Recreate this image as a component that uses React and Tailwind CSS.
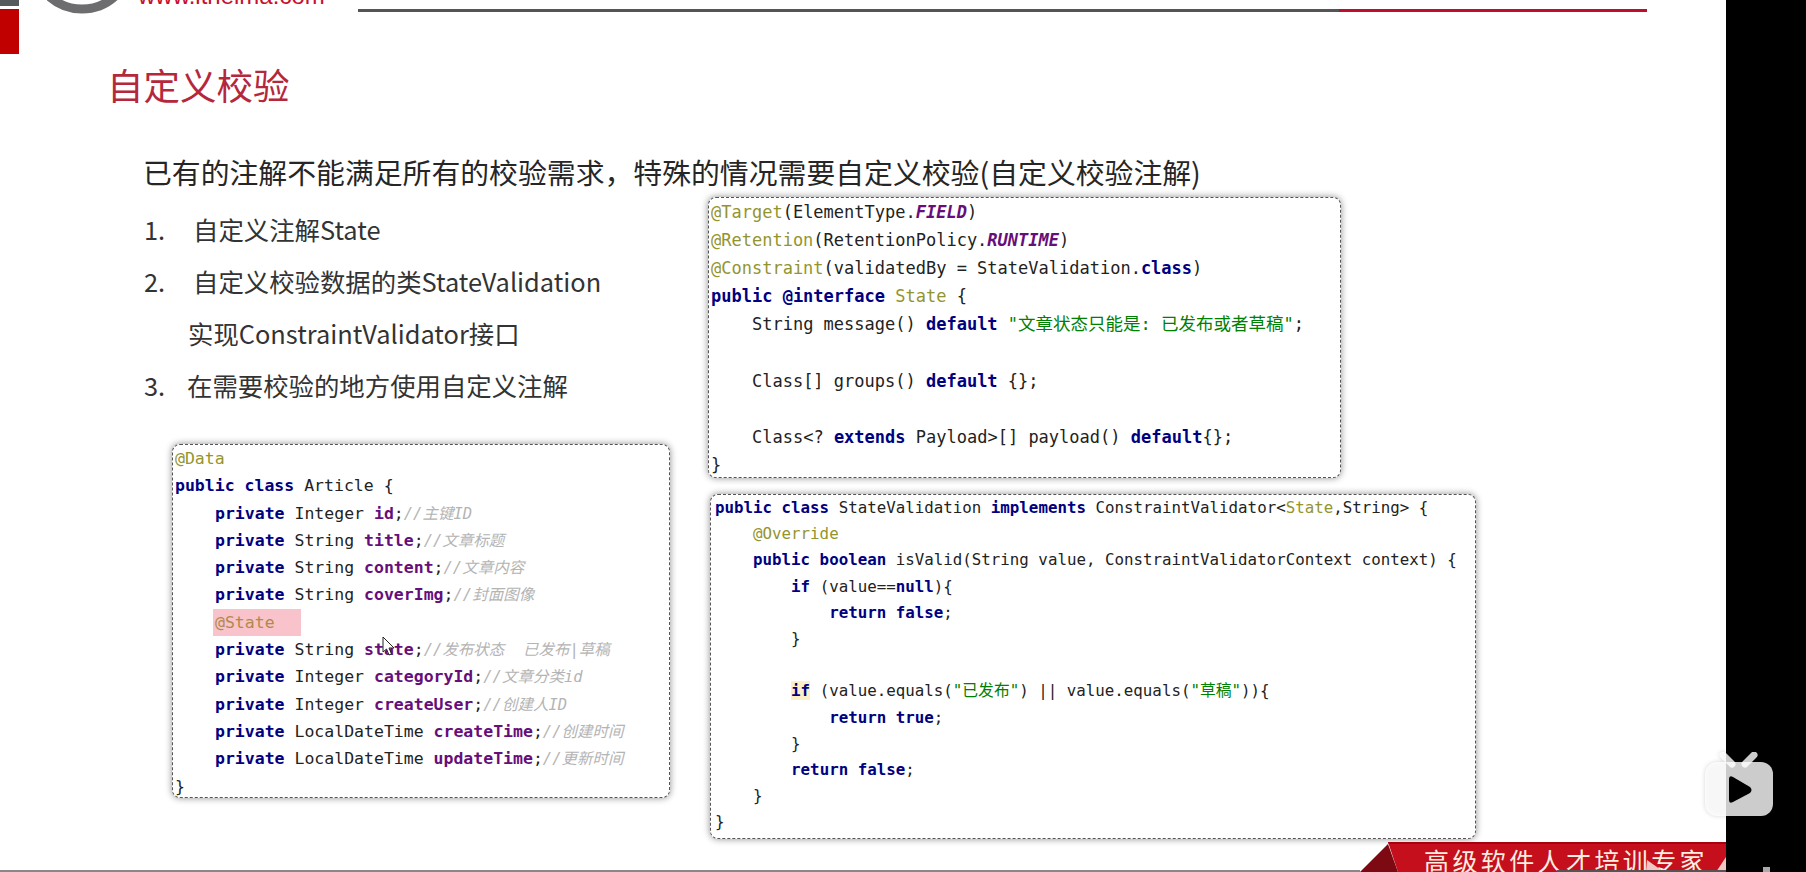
// App.jsx
const CJK = "font-['Noto_Sans_CJK_SC',sans-serif]";

function K({ children }) {
  return <span className="font-bold text-[#000080]">{children}</span>;
}

function F({ children }) {
  return <span className="font-bold text-[#660e7a]">{children}</span>;
}

function A({ children }) {
  return <span className="text-[#94942e]">{children}</span>;
}

function S({ children }) {
  return <span className="text-[#008000]">{children}</span>;
}

function Note({ children }) {
  return <span className="text-[15.5px] leading-none italic text-[#b4b4b4]">{children}</span>;
}

function CodeCard({ className, children }) {
  return (
    <div className={`rounded-lg border border-dashed border-[#555555] bg-white font-['DejaVu_Sans_Mono','Noto_Sans_CJK_SC',monospace] text-[#222222] whitespace-pre shadow-[0_0_7px_rgba(0,0,0,0.45)] ${className}`}>
      {children}
    </div>
  );
}

function ArticleField({ type, name, note }) {
  return (
    <div className="h-[27.3px] pl-[40px]">
      <K>private</K> {type} <F>{name}</F>;<Note>//{note}</Note>
    </div>
  );
}

function ArticleCard() {
  return (
    <CodeCard className="relative ml-[172px] mt-[33px] w-[498px] h-[354px] pl-[2px] text-[16.5px] leading-[27.3px]">
      <div className="h-[27.3px]"><A>@Data</A></div>
      <div className="h-[27.3px]"><K>public class</K> Article {"{"}</div>
      <ArticleField type="Integer" name="id" note="主键ID" />
      <ArticleField type="String" name="title" note="文章标题" />
      <ArticleField type="String" name="content" note="文章内容" />
      <ArticleField type="String" name="coverImg" note="封面图像" />
      <div className="h-[27.3px] pl-[40px]">
        <span className="inline-block w-[88px] -ml-[2px] pl-[2px] bg-[#f9c3cb] text-[#b08a4a]">@State</span>
      </div>
      <ArticleField type="String" name="state" note="发布状态  已发布|草稿" />
      <ArticleField type="Integer" name="categoryId" note="文章分类id" />
      <ArticleField type="Integer" name="createUser" note="创建人ID" />
      <ArticleField type="LocalDateTime" name="createTime" note="创建时间" />
      <ArticleField type="LocalDateTime" name="updateTime" note="更新时间" />
      <div className="h-[27.3px]">{"}"}</div>
      {/* mouse pointer */}
      <svg className="absolute left-[209px] top-[191px]" width="14" height="21" viewBox="0 0 14 21">
        <path d="M1 1 L1 16 L4.5 13 L7 19 L9.5 18 L7 12 L12 12 Z" fill="#fff" stroke="#222" strokeWidth="1" />
      </svg>
    </CodeCard>
  );
}

function StateCard() {
  return (
    <CodeCard className="w-[633px] h-[281px] pl-[2px] text-[17px] leading-[28.1px]">
      <div><A>@Target</A>(ElementType.<span className="font-bold italic text-[#660e7a]">FIELD</span>)</div>
      <div><A>@Retention</A>(RetentionPolicy.<span className="font-bold italic text-[#660e7a]">RUNTIME</span>)</div>
      <div><A>@Constraint</A>(validatedBy = StateValidation.<K>class</K>)</div>
      <div><K>public @interface</K> <A>State</A> {"{"}</div>
      <div>{"    "}String message() <K>default</K> <S>"<span className="text-[17.5px]">文章状态只能是</span>: <span className="text-[17.5px]">已发布或者草稿</span>"</S>;</div>
      <div>{" "}</div>
      <div>{"    "}Class[] groups() <K>default</K> {"{}"};</div>
      <div>{" "}</div>
      <div>{"    "}Class{"<?"} <K>extends</K> Payload{">[]"} payload() <K>default</K>{"{}"};</div>
      <div>{"}"}</div>
    </CodeCard>
  );
}

function ValidationCard() {
  return (
    <CodeCard className="mt-[16px] ml-[2px] w-[766px] h-[345px] pl-[4px] text-[15.8px] leading-[26.2px]">
      <div><K>public class</K> StateValidation <K>implements</K> ConstraintValidator{"<"}<A>State</A>,String{">"} {"{"}</div>
      <div>{"    "}<A>@Override</A></div>
      <div>{"    "}<K>public boolean</K> isValid(String value, ConstraintValidatorContext context) {"{"}</div>
      <div>{"        "}<K>if</K> (value==<K>null</K>){"{"}</div>
      <div>{"            "}<K>return false</K>;</div>
      <div>{"        }"}</div>
      <div>{" "}</div>
      <div>{"        "}<span className="bg-[#fcefc8]"><K>if</K></span> (value.equals(<S>"已发布"</S>) || value.equals(<S>"草稿"</S>)){"{"}</div>
      <div>{"            "}<K>return true</K>;</div>
      <div>{"        }"}</div>
      <div>{"        "}<K>return false</K>;</div>
      <div>{"    }"}</div>
      <div>{"}"}</div>
    </CodeCard>
  );
}

function TopBar() {
  return (
    <div className="flex h-[54px] shrink-0">
      <div className="flex w-[19px] flex-col gap-[3px]">
        <div className="h-[6px] bg-[#555a5c]" />
        <div className="h-[45px] bg-[#c00000]" />
      </div>
      {/* logo ring, cut off by the top edge */}
      <svg className="ml-[28px]" width="72" height="14" viewBox="0 0 72 14">
        <circle cx="35" cy="-40" r="49" fill="none" stroke="#6d6d6f" strokeWidth="9" />
      </svg>
      <div className="ml-[19px] flex h-[8px] items-end overflow-hidden font-['Liberation_Sans',sans-serif] text-[24px] leading-none text-[#c8102e]">
        www.itheima.com
      </div>
      <div className="ml-[33px] mt-[9px] flex h-[3px]">
        <div className="w-[981px] bg-[#555555]" />
        <div className="w-[308px] bg-[#c00d2e]" />
      </div>
    </div>
  );
}

function Ribbon() {
  return (
    <div className="mt-auto flex h-[30px] shrink-0 items-end overflow-hidden">
      <div className="h-[2px] w-[1360px] bg-[#888888]" />
      <svg className="shrink-0" width="38" height="30" viewBox="0 0 38 30">
        <path d="M28 0 L38 0 L38 30 Z" fill="#c50f1c" />
        <path d="M28 0 L38 0 L38 2 L28.7 2 Z" fill="#a8000f" />
        <path d="M0 30 L28 2 L38 30 Z" fill="#7d0a12" />
      </svg>
      <div className={`relative flex h-[30px] flex-1 items-start overflow-hidden border-t-2 border-[#a8000f] bg-[#c50f1c] pl-[26px] ${CJK}`}>
        <span className="text-[25px] leading-[32px] tracking-[3.4px] text-[#fdeee0]">高级软件人才培训专家</span>
        <svg className="absolute right-0 bottom-0" width="90" height="16" viewBox="0 0 90 16">
          <path d="M10 16 L11 4 L28 16 Z M80 16 L90 1 L90 16 Z" fill="#f3c6c6" />
        </svg>
        <div className="absolute right-0 bottom-0 h-[2px] w-[169px] bg-[#555555]" />
      </div>
    </div>
  );
}

function BiliBadge() {
  return (
    <svg className="absolute left-[1705px] top-[752px] drop-shadow-[0_0_2px_rgba(0,0,0,0.2)]" width="68" height="66" viewBox="0 0 68 66">
      <path d="M18 3 L27 12 M49 3 L40 12" stroke="rgba(255,255,255,0.8)" strokeWidth="7" strokeLinecap="round" />
      <rect x="0" y="10" width="68" height="54" rx="12" fill="rgba(255,255,255,0.8)" />
      <path d="M24 27 Q24 23 28 25 L45 35 Q48 38 45 41 L28 50 Q24 52 24 48 Z" fill="#000" />
    </svg>
  );
}

export default function App() {
  return (
    <div className={`relative flex h-[872px] w-[1806px] overflow-hidden bg-black ${CJK}`}>
      <div className="flex w-[1726px] shrink-0 flex-col bg-white">
        <TopBar />
        <h1 className="ml-[107px] mt-[9px] text-[36.5px] leading-[44px] font-normal text-[#b5283c]">自定义校验</h1>
        <p className="ml-[143px] mt-[45px] text-[28.85px] leading-[40px] text-[#262626]">
          已有的注解不能满足所有的校验需求，特殊的情况需要自定义校验(自定义校验注解)
        </p>
        <div className="mt-[5px] flex">
          <div className="w-[708px] shrink-0">
            <div className="ml-[144px] mt-[6px] text-[25.4px] leading-[52px] text-[#333333]">
              <div className="flex"><span className="w-[49px]">1.</span>自定义注解State</div>
              <div className="flex"><span className="w-[49px]">2.</span>自定义校验数据的类StateValidation</div>
              <div className="pl-[44px]">实现ConstraintValidator接口</div>
              <div className="flex"><span className="w-[43px]">3.</span>在需要校验的地方使用自定义注解</div>
            </div>
            <ArticleCard />
          </div>
          <div>
            <StateCard />
            <ValidationCard />
          </div>
        </div>
        <Ribbon />
      </div>
      <BiliBadge />
      <div className="absolute bottom-0 left-[1763px] h-[5px] w-[7px] bg-[#aaaaaa]" />
    </div>
  );
}
